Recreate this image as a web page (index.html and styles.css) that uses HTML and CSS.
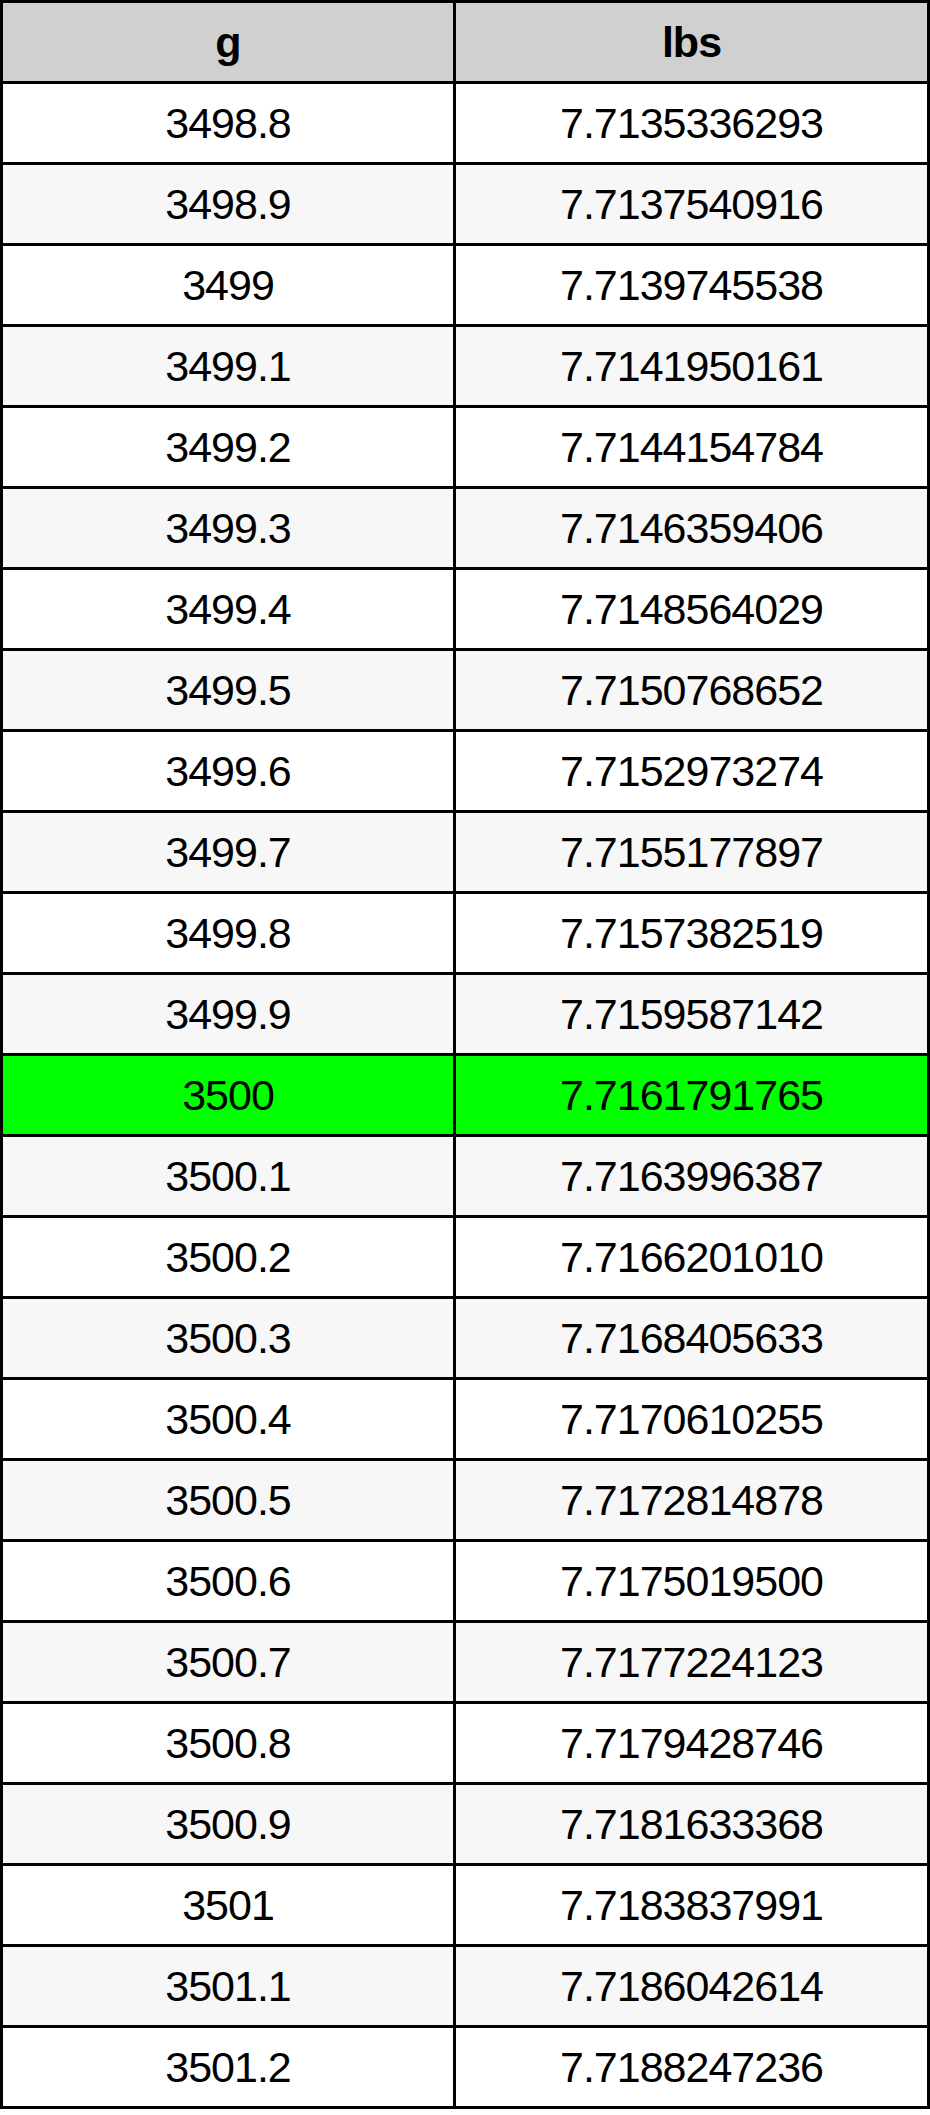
FILE: index.html
```html
<!DOCTYPE html>
<html>
<head>
<meta charset="utf-8">
<link rel="stylesheet" href="styles.css">
</head>
<body>
<table class="conv">
<colgroup><col class="c-g"><col class="c-lbs"></colgroup>
<thead>
<tr><th>g</th><th>lbs</th></tr>
</thead>
<tbody>
<tr><td>3498.8</td><td>7.7135336293</td></tr>
<tr><td>3498.9</td><td>7.7137540916</td></tr>
<tr><td>3499</td><td>7.7139745538</td></tr>
<tr><td>3499.1</td><td>7.7141950161</td></tr>
<tr><td>3499.2</td><td>7.7144154784</td></tr>
<tr><td>3499.3</td><td>7.7146359406</td></tr>
<tr><td>3499.4</td><td>7.7148564029</td></tr>
<tr><td>3499.5</td><td>7.7150768652</td></tr>
<tr><td>3499.6</td><td>7.7152973274</td></tr>
<tr><td>3499.7</td><td>7.7155177897</td></tr>
<tr><td>3499.8</td><td>7.7157382519</td></tr>
<tr><td>3499.9</td><td>7.7159587142</td></tr>
<tr class="hl"><td>3500</td><td>7.7161791765</td></tr>
<tr><td>3500.1</td><td>7.7163996387</td></tr>
<tr><td>3500.2</td><td>7.7166201010</td></tr>
<tr><td>3500.3</td><td>7.7168405633</td></tr>
<tr><td>3500.4</td><td>7.7170610255</td></tr>
<tr><td>3500.5</td><td>7.7172814878</td></tr>
<tr><td>3500.6</td><td>7.7175019500</td></tr>
<tr><td>3500.7</td><td>7.7177224123</td></tr>
<tr><td>3500.8</td><td>7.7179428746</td></tr>
<tr><td>3500.9</td><td>7.7181633368</td></tr>
<tr><td>3501</td><td>7.7183837991</td></tr>
<tr><td>3501.1</td><td>7.7186042614</td></tr>
<tr><td>3501.2</td><td>7.7188247236</td></tr>
</tbody>
</table>
</body>
</html>
```
FILE: styles.css
```css
html, body {
  margin: 0;
  padding: 0;
  background: #ffffff;
}

.conv {
  border-collapse: collapse;
  table-layout: fixed;
  width: 930px;
  margin: 0;
  font-family: "Liberation Sans", Arial, sans-serif;
  font-size: 43px;
  letter-spacing: -1px;
  color: #000;
}

.c-g {
  width: 453px;
}

.conv th,
.conv td {
  border: 3px solid #000;
  height: 78px;
  padding: 0;
  text-align: center;
  vertical-align: middle;
  line-height: 1;
}

.conv th {
  background: #d0d0d0;
  font-weight: bold;
}

.conv tbody tr:nth-child(even) td {
  background: #f7f7f7;
}

.conv tbody tr.hl td {
  background: #00ff00;
}
```
